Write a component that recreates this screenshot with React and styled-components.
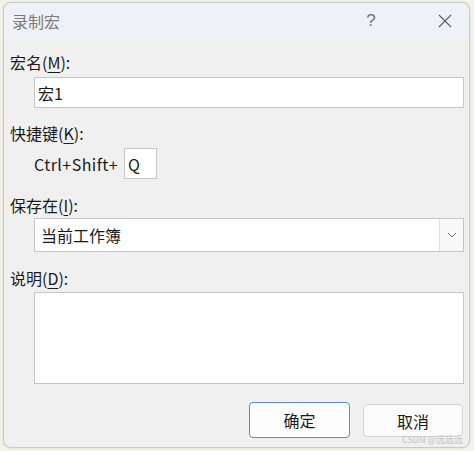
import React from "react";
import styled, { createGlobalStyle } from "styled-components";

const Global = createGlobalStyle`
  html, body {
    margin: 0;
    padding: 0;
    background: #f3f3ea;
  }
  * {
    box-sizing: border-box;
  }
`;

const font = `"Noto Sans CJK SC", "Noto Sans", sans-serif`;

const Page = styled.div`
  padding: 2px 4px 3px 3px;
  font-family: ${font};
`;

const Dialog = styled.div`
  position: relative;
  width: 467px;
  height: 446px;
  border: 1px solid #c9c9c9;
  border-radius: 8px;
  background: #f0f0f0;
  overflow: hidden;
  display: flex;
  flex-direction: column;
  box-shadow: 0 0 2px rgba(0, 0, 0, 0.15);
`;

const TitleBar = styled.div`
  height: 36px;
  flex: none;
  display: flex;
  align-items: center;
  background: #eef1f5;
  padding-left: 8px;
`;

const Title = styled.div`
  flex: 1;
  font-size: 16px;
  color: #7b7b7b;
`;

const Help = styled.div`
  width: 20px;
  margin-right: 44px;
  text-align: center;
  font-size: 17px;
  color: #707070;
  font-family: "Liberation Sans", sans-serif;
`;

const Close = styled.div`
  width: 40px;
  margin-right: 4px;
  display: flex;
  justify-content: center;
  align-items: center;
`;

const Body = styled.div`
  flex: 1;
  display: flex;
  flex-direction: column;
  padding: 13px 5px 9px 6px;
`;

const Label = styled.div`
  height: 20px;
  line-height: 20px;
  font-size: 16px;
  color: #1a1a1a;
  margin-top: ${(p) => p.$top || 0}px;

  u {
    text-decoration-thickness: 1px;
    text-underline-offset: 3px;
  }
`;

const Field = styled.div`
  margin-left: 24px;
  margin-top: ${(p) => p.$top || 0}px;
  height: ${(p) => p.$h}px;
  background: #fff;
  border: 1px solid #c6c6c6;
  display: flex;
  align-items: center;
  font-size: 16px;
  color: #1a1a1a;
`;

const FieldText = styled.span`
  flex: 1;
  padding-left: ${(p) => p.$pad || 3}px;
`;

const DropButton = styled.div`
  width: 24px;
  height: 100%;
  border-left: 1px solid #e2e2e2;
  background: #f8f8f8;
  display: flex;
  align-items: center;
  justify-content: center;
`;

const ShortcutRow = styled.div`
  margin-left: 24px;
  margin-top: 5px;
  height: 31px;
  display: flex;
  align-items: center;
  gap: 6px;
  font-size: 16px;
  color: #1a1a1a;

  span {
    letter-spacing: 0.45px;
  }
`;

const KeyBox = styled.div`
  width: 33px;
  height: 31px;
  background: #fff;
  border: 1px solid #c6c6c6;
  display: flex;
  align-items: center;
  padding-left: 3px;
  font-size: 16px;
`;

const Buttons = styled.div`
  margin-top: 18px;
  display: flex;
  justify-content: flex-end;
  gap: 13px;
  padding-right: 1px;
`;

const Button = styled.div`
  width: ${(p) => (p.$primary ? 101 : 100)}px;
  height: ${(p) => (p.$primary ? 36 : 33)}px;
  margin-top: ${(p) => (p.$primary ? 0 : 2)}px;
  border: 1px solid ${(p) => (p.$primary ? "#5a8bd3" : "#d3d3d3")};
  border-radius: 4px;
  background: ${(p) => (p.$primary ? "#fdfdfd" : "#fbfbfb")};
  display: flex;
  align-items: center;
  justify-content: center;
  font-size: 16px;
  color: #1a1a1a;
`;

const Watermark = styled.div`
  position: absolute;
  right: 6px;
  bottom: 1px;
  font-size: 9px;
  color: #c4c4c4;
`;

export default function App() {
  return (
    <>
      <Global />
      <Page>
        <Dialog>
          <TitleBar>
            <Title>录制宏</Title>
            <Help>?</Help>
            <Close>
              <svg width="14" height="14" viewBox="0 0 14 14">
                <path d="M1 1 L13 13 M13 1 L1 13" stroke="#5c5c5c" strokeWidth="1.1" fill="none" />
              </svg>
            </Close>
          </TitleBar>
          <Body>
            <Label>
              宏名(<u>M</u>):
            </Label>
            <Field $top={5} $h={31}>
              <FieldText>宏1</FieldText>
            </Field>
            <Label $top={15}>
              快捷键(<u>K</u>):
            </Label>
            <ShortcutRow>
              <span>Ctrl+Shift+</span>
              <KeyBox>Q</KeyBox>
            </ShortcutRow>
            <Label $top={16}>
              保存在(<u>I</u>):
            </Label>
            <Field $top={3} $h={34}>
              <FieldText $pad={6}>当前工作簿</FieldText>
              <DropButton>
                <svg width="10" height="6" viewBox="0 0 10 6">
                  <path d="M1 1 L5 5 L9 1" stroke="#6a6a6a" strokeWidth="1" fill="none" />
                </svg>
              </DropButton>
            </Field>
            <Label $top={16}>
              说明(<u>D</u>):
            </Label>
            <Field $top={4} $h={92} />
            <Buttons>
              <Button $primary>确定</Button>
              <Button>取消</Button>
            </Buttons>
          </Body>
          <Watermark>CSDN @远远远</Watermark>
        </Dialog>
      </Page>
    </>
  );
}
